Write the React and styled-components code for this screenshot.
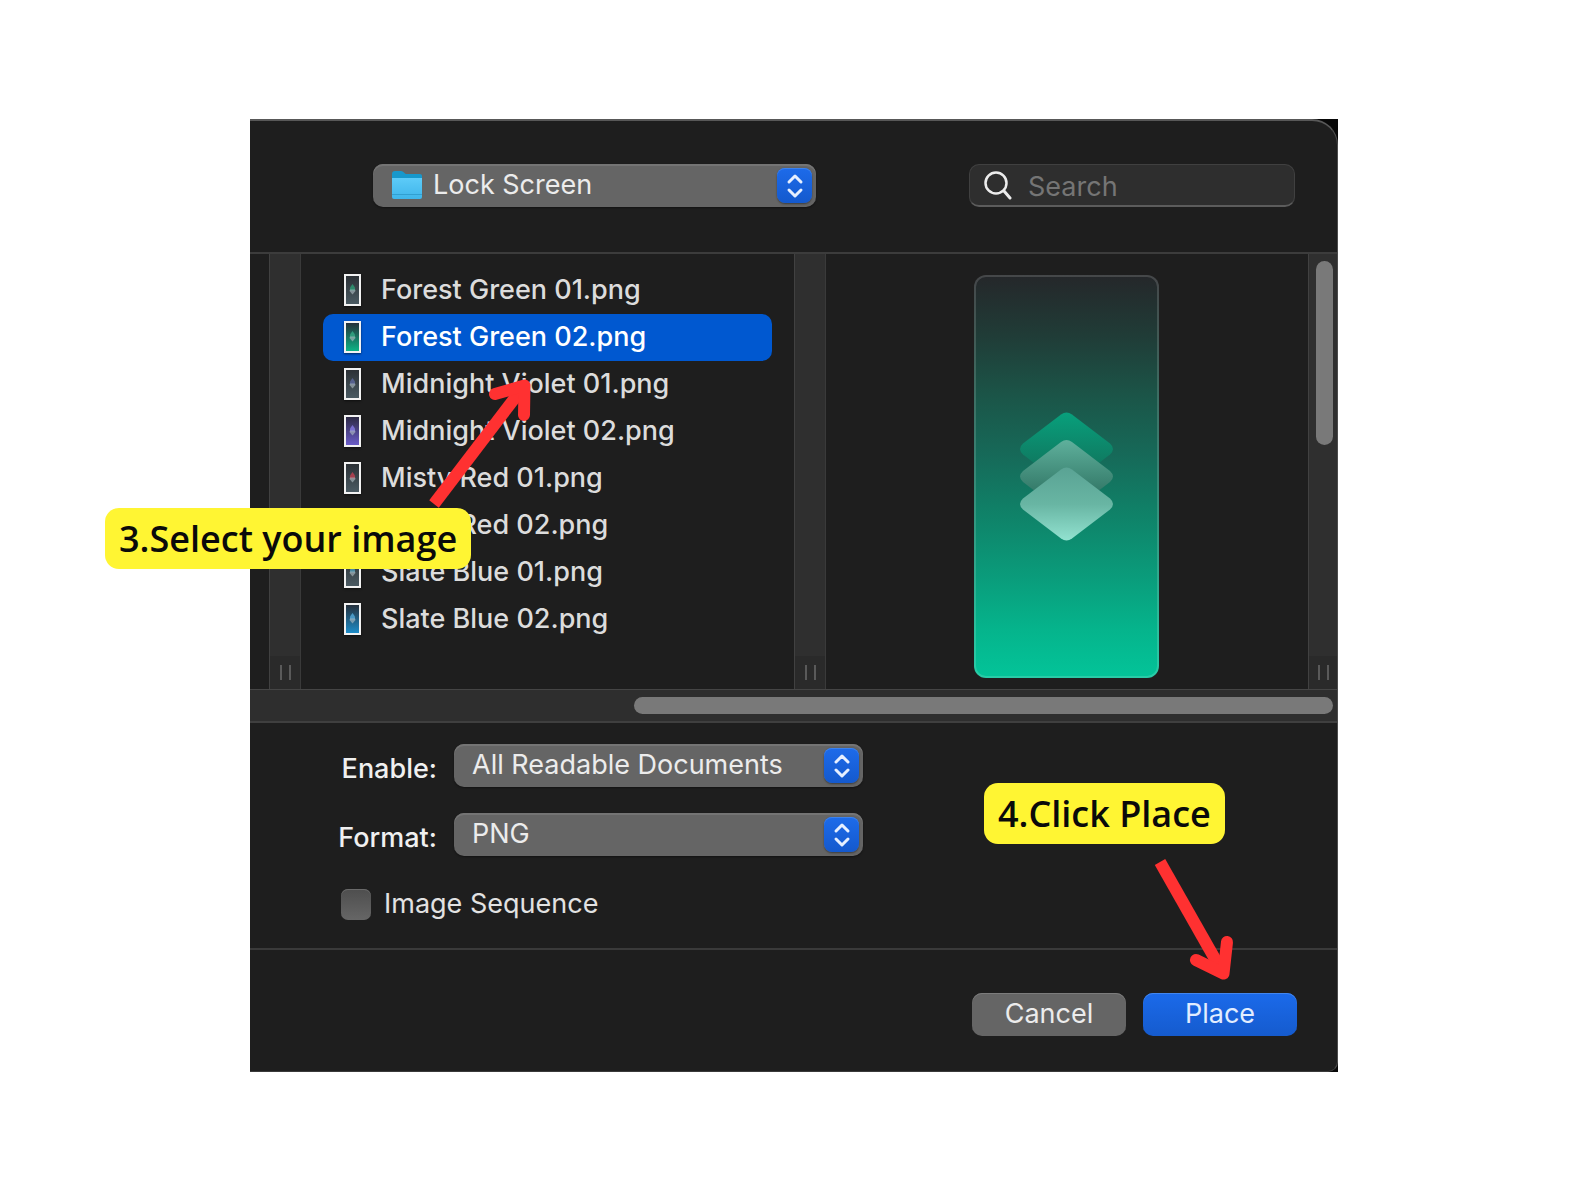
import React, { useState } from "react";
import styled, { createGlobalStyle } from "styled-components";

const GlobalStyle = createGlobalStyle`
  *, *::before, *::after { box-sizing: border-box; }
  body {
    margin: 0;
    background: #ffffff;
    font-family: Inter, "Liberation Sans", sans-serif;
    -webkit-font-smoothing: antialiased;
  }
  button, input, select { font: inherit; color: inherit; }
`;

const Page = styled.main`
  padding: 119px 250px;
`;

const Stage = styled.div`
  position: relative;
  background: #080808;
`;

const Dialog = styled.section`
  overflow: hidden;
  background: #1e1e1e;
  color: #e2e2e2;
  border-top: 2px solid #585858;
  border-right: 1px solid #4c4c4c;
  border-bottom: 1px solid #3a3a3a;
  border-radius: 0 26px 10px 0;
  font-size: 27px;
  line-height: 32px;
`;

const Toolbar = styled.header`
  display: flex;
  justify-content: space-between;
  align-items: flex-start;
  gap: 24px;
  padding: 43px 42px 45px 123px;
`;

const PopupBox = styled.div`
  position: relative;
  display: flex;
  flex: 0 1 ${(p) => p.$width}px;
  width: 100%;
  max-width: ${(p) => p.$width}px;
`;

const PopupSelect = styled.select`
  appearance: none;
  width: 100%;
  height: 43px;
  margin: 0;
  padding: 0 48px 2px ${(p) => (p.$icon ? 60 : 18)}px;
  border: 0;
  border-radius: 10px;
  background: #656565;
  color: #ececec;
  box-shadow: inset 0 2px 0 #747474, 0 1px 2px #00000066;
  outline: none;
`;

const Stepper = styled.span`
  position: absolute;
  top: 4px;
  right: 4px;
  display: grid;
  place-items: center;
  width: 35px;
  height: 35px;
  border-radius: 8px;
  background: linear-gradient(#1d6bea, #1459cd);
  box-shadow: inset 0 1px 0 #3c82ee, 0 1px 2px #00000066;
  pointer-events: none;
`;

const FolderSlot = styled.span`
  position: absolute;
  top: 6px;
  left: 18px;
  display: flex;
  pointer-events: none;
`;

const SearchField = styled.label`
  display: flex;
  align-items: center;
  gap: 16px;
  flex: 0 1 326px;
  min-width: 0;
  height: 43px;
  padding: 0 14px;
  border: 1px solid #404040;
  border-bottom: 2px solid #5c5c5c;
  border-radius: 10px;
  background: #2e2e2e;
`;

const SearchInput = styled.input`
  flex: 1;
  min-width: 0;
  padding: 3px 0 0;
  border: 0;
  background: transparent;
  outline: none;
  &::placeholder { color: #757575; opacity: 1; }
`;

const Browser = styled.div`
  display: flex;
  border-top: 2px solid #3c3c3c;
`;

const ParentColumn = styled.div`
  flex: 0 0 19px;
`;

const Gutter = styled.div`
  display: flex;
  flex-direction: column;
  justify-content: space-between;
  flex: 0 0 ${(p) => (p.$edge ? 29 : 32)}px;
  border-left: 1px solid #414141;
  border-right: ${(p) => (p.$edge ? 0 : 1)}px solid #3a3a3a;
  background: #2f2f2f;
`;

const Handle = styled.div`
  display: flex;
  justify-content: center;
  align-items: center;
  gap: 7px;
  height: 33px;
  margin-top: auto;
  background: #2a2a2a;
  &::before, &::after {
    content: "";
    width: 2px;
    height: 15px;
    background: #5a5a5a;
  }
`;

const VerticalThumb = styled.div`
  width: 17px;
  height: 184px;
  margin: 7px 4px 0 auto;
  border-radius: 9px;
  background: #797979;
`;

const FileList = styled.ul`
  flex: 0 1 493px;
  min-width: 0;
  margin: 0;
  padding: 13px 22px 46px;
  list-style: none;
`;

const FileButton = styled.button`
  display: flex;
  align-items: center;
  gap: 20px;
  width: 100%;
  height: 47px;
  padding: 0 0 2px 21px;
  border: 0;
  border-radius: 10px;
  background: ${(p) => (p.$selected ? "#0058d0" : "transparent")};
  color: ${(p) => (p.$selected ? "#ffffff" : "#dcdcdc")};
  font-weight: 500;
  text-align: left;
  white-space: nowrap;
`;

const Thumb = styled.span`
  display: grid;
  place-items: center;
  flex: none;
  width: 17px;
  height: 32px;
  border: 2px solid #f2f2f2;
  background: linear-gradient(${(p) => p.$from}, ${(p) => p.$to});
  box-shadow: 0 1px 2px #00000088;
`;

const PreviewColumn = styled.div`
  display: flex;
  justify-content: center;
  align-items: flex-start;
  flex: 1;
  padding: 21px 2px 11px 0;
`;

const PreviewCard = styled.figure`
  display: grid;
  place-items: center;
  width: 185px;
  height: 403px;
  margin: 0;
  border: 2px solid #ffffff26;
  border-radius: 12px;
  background: linear-gradient(#25272a 0%, #203c37 15%, #1b5548 30%, #166a59 45%, #0f8369 60%, #0a9c7b 75%, #05b48c 88%, #03c499 100%) border-box;
`;

const HorizontalTrack = styled.div`
  display: flex;
  justify-content: flex-end;
  height: 34px;
  padding: 7px 4px 0 384px;
  border-top: 1px solid #454545;
  border-bottom: 2px solid #3f3f3f;
  background: #2e2e2e;
`;

const HorizontalThumb = styled.div`
  width: 100%;
  height: 17px;
  border-radius: 9px;
  background: #797979;
`;

const Options = styled.form`
  display: grid;
  grid-template-columns: 187px 1fr;
  column-gap: 17px;
  row-gap: 26px;
  padding: 21px 0 28px;
`;

const OptionLabel = styled.label`
  padding-top: 9px;
  color: #f0f0f0;
  font-weight: 500;
  text-align: right;
`;

const CheckRow = styled.label`
  display: flex;
  align-items: center;
  gap: 13px;
  grid-column: 1 / -1;
  padding: 6px 0 0 91px;
`;

const Checkbox = styled.input`
  appearance: none;
  width: 30px;
  height: 31px;
  margin: 0;
  border-radius: 7px;
  background: linear-gradient(#4e4e4e, #666666);
  box-shadow: inset 0 1px 0 #6a6a6a;
`;

const Footer = styled.footer`
  display: flex;
  justify-content: flex-end;
  gap: 17px;
  padding: 43px 40px 35px;
  border-top: 2px solid #3a3a3a;
`;

const ActionButton = styled.button`
  width: 154px;
  height: 43px;
  padding: 0 0 2px;
  border: 0;
  border-radius: 10px;
  background: ${(p) => (p.$primary ? "linear-gradient(#1b6aea, #155bce)" : "#656565")};
  box-shadow: inset 0 1px 0 ${(p) => (p.$primary ? "#4286ee" : "#7c7c7c")};
  color: ${(p) => (p.$primary ? "#e2edff" : "#ececec")};
`;

const Callout = styled.p`
  position: absolute;
  top: ${(p) => p.$top}px;
  left: ${(p) => p.$left}px;
  margin: 0;
  padding: 8px 14px;
  border-radius: 14px;
  background: #fff533;
  color: #0a0a0a;
  font: 600 36px/45px "Open Sans", sans-serif;
  white-space: nowrap;
`;

const Arrow = styled.svg`
  position: absolute;
  top: ${(p) => p.$top}px;
  left: ${(p) => p.$left}px;
  fill: none;
  stroke: #ff3131;
  stroke-width: 12;
  stroke-linejoin: round;
  pointer-events: none;
`;

function Chevrons() {
  return (
    <Stepper aria-hidden="true">
      <svg width="18" height="26" viewBox="0 0 18 26" fill="none" stroke="#e6efff" strokeWidth="3" strokeLinecap="round" strokeLinejoin="round">
        <path d="M3 9 9 3l6 6M3 17l6 6 6-6" />
      </svg>
    </Stepper>
  );
}

function Popup({ id, label, value, width, icon }) {
  return (
    <PopupBox $width={width}>
      <PopupSelect id={id} aria-label={label} $icon={Boolean(icon)} defaultValue={value}>
        <option>{value}</option>
      </PopupSelect>
      {icon}
      <Chevrons />
    </PopupBox>
  );
}

function Folder() {
  return (
    <FolderSlot aria-hidden="true">
      <svg width="32" height="31" viewBox="0 0 32 31">
        <defs>
          <linearGradient id="folderFront" x2="0" y2="1">
            <stop offset="0" stopColor="#5dcbf8" />
            <stop offset="1" stopColor="#3fb5ea" />
          </linearGradient>
        </defs>
        <path d="M1 4q0-3 3-3h6q2 0 3 1.500l1 1q1 .5 2 .5h13q2 0 2 2v8H1z" fill="#1798cc" />
        <path d="M1 8h30v19q0 2-2 2H3q-2 0-2-2z" fill="url(#folderFront)" />
        <path d="M1 24.500h30" stroke="#329fd1" />
      </svg>
    </FolderSlot>
  );
}

const DIAMOND = "M41 2.500Q46.500-1.500 52 2.500L90 31.500Q96 37 90 42.500L52 71.500Q46.500 75.500 41 71.500L3 42.500Q-3 37 3 31.500Z";

function Diamonds() {
  return (
    <svg width="93" height="130" viewBox="0 0 93 130" role="img" aria-label="Forest Green 02">
      <defs>
        <linearGradient id="back" x2="0" y2="1">
          <stop offset="0" stopColor="#08a07c" />
          <stop offset=".7" stopColor="#0f7a61" />
        </linearGradient>
        <linearGradient id="middle" x2="0" y2="1">
          <stop offset="0" stopColor="#5fb09c" />
          <stop offset=".7" stopColor="#347a69" />
        </linearGradient>
        <linearGradient id="front" x2="0" y2="1">
          <stop offset="0" stopColor="#5aa394" />
          <stop offset=".5" stopColor="#68b5a3" />
          <stop offset="1" stopColor="#92e2d0" />
        </linearGradient>
      </defs>
      <path d={DIAMOND} fill="url(#back)" />
      <path d={DIAMOND} transform="translate(0 27.500)" fill="url(#middle)" />
      <path d={DIAMOND} transform="translate(0 55)" fill="url(#front)" />
    </svg>
  );
}

const FILES = [
  { name: "Forest Green 01.png", from: "#2c3136", to: "#4a5a62", mark: "#2f8a6c" },
  { name: "Forest Green 02.png", from: "#25303a", to: "#0db385", mark: "#2f9a7c" },
  { name: "Midnight Violet 01.png", from: "#2c3136", to: "#4a5a62", mark: "#55608c" },
  { name: "Midnight Violet 02.png", from: "#2d2a45", to: "#6a5cc8", mark: "#7a6fd0" },
  { name: "Misty Red 01.png", from: "#2c3136", to: "#4a5a62", mark: "#a5404f" },
  { name: "Misty Red 02.png", from: "#3a2a30", to: "#c0505c", mark: "#c8707a" },
  { name: "Slate Blue 01.png", from: "#2c3136", to: "#4a5a62", mark: "#4a88a0" },
  { name: "Slate Blue 02.png", from: "#25303c", to: "#1d8cc8", mark: "#4a98c4" },
];

function FileThumb({ file }) {
  return (
    <Thumb $from={file.from} $to={file.to} aria-hidden="true">
      <svg width="7" height="11" viewBox="0 0 7 11">
        <path d="M3.500 0 6 3.500V6.500H1V3.500z" fill={file.mark} />
        <path d="M1 5.500h5L6.500 7 3.500 10.500.5 7z" fill="#b4c2c8" opacity=".6" />
      </svg>
    </Thumb>
  );
}

export default function App() {
  const [selected, setSelected] = useState("Forest Green 02.png");

  return (
    <>
      <GlobalStyle />
      <Page>
        <Stage>
          <Dialog role="dialog" aria-label="Place image">
            <Toolbar>
              <Popup id="folder" label="Folder" value="Lock Screen" width={443} icon={<Folder />} />
              <SearchField>
                <svg width="28" height="29" viewBox="0 0 28 29" fill="none" stroke="#ececec" strokeLinecap="round" aria-hidden="true">
                  <circle cx="12" cy="12" r="10.500" strokeWidth="2.500" />
                  <path d="m20 20 6 7" strokeWidth="3" />
                </svg>
                <SearchInput type="search" placeholder="Search" aria-label="Search" />
              </SearchField>
            </Toolbar>

            <Browser>
              <ParentColumn />
              <Gutter><Handle /></Gutter>
              <FileList>
                {FILES.map((file) => (
                  <li key={file.name}>
                    <FileButton
                      type="button"
                      aria-pressed={file.name === selected}
                      $selected={file.name === selected}
                      onClick={() => setSelected(file.name)}
                    >
                      <FileThumb file={file} />
                      {file.name}
                    </FileButton>
                  </li>
                ))}
              </FileList>
              <Gutter><Handle /></Gutter>
              <PreviewColumn>
                <PreviewCard><Diamonds /></PreviewCard>
              </PreviewColumn>
              <Gutter $edge>
                <VerticalThumb />
                <Handle />
              </Gutter>
            </Browser>
            <HorizontalTrack><HorizontalThumb /></HorizontalTrack>

            <Options>
              <OptionLabel htmlFor="enable">Enable:</OptionLabel>
              <Popup id="enable" value="All Readable Documents" width={409} />
              <OptionLabel htmlFor="format">Format:</OptionLabel>
              <Popup id="format" value="PNG" width={409} />
              <CheckRow>
                <Checkbox type="checkbox" />
                Image Sequence
              </CheckRow>
            </Options>

            <Footer>
              <ActionButton type="button">Cancel</ActionButton>
              <ActionButton type="button" $primary>Place</ActionButton>
            </Footer>
          </Dialog>

          <Arrow $top={254} $left={174} width="112" height="140" viewBox="0 0 112 140" aria-hidden="true">
            <path d="M10 131 100 13" />
            <path d="M71 21 100.500 12.500 100 42" strokeLinecap="round" />
          </Arrow>
          <Callout $top={389} $left={-145}>3.Select your image</Callout>
          <Callout $top={664} $left={734}>4.Click Place</Callout>
          <Arrow $top={735} $left={900} width="90" height="132" viewBox="0 0 90 132" aria-hidden="true">
            <path d="M10 8 73 119" />
            <path d="M46 106 73.500 119.500 77 88" strokeLinecap="round" />
          </Arrow>
        </Stage>
      </Page>
    </>
  );
}
